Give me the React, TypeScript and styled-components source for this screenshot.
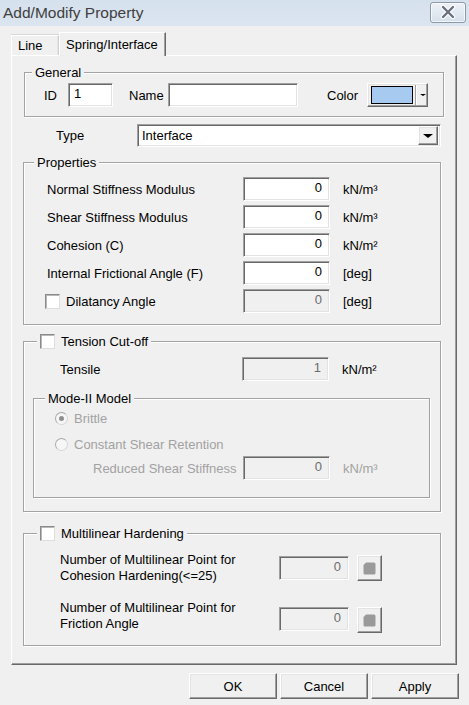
import React from "react";
import styled, { createGlobalStyle } from "styled-components";

const GlobalStyle = createGlobalStyle`
  html, body { margin: 0; padding: 0; background: #f0f0f0; }
  body {
    width: 469px; height: 705px; overflow: hidden;
    font-family: "Liberation Sans", Arial, sans-serif; font-size: 13px; color: #000;
  }
  #root { width: 469px; height: 705px; }
  * { box-sizing: border-box; }
`;

const Window = styled.div`
  width: 469px;
  height: 705px;
  display: flex;
  flex-direction: column;
  background: #f0f0f0;
`;

const TitleBar = styled.div`
  height: 26px;
  flex: none;
  display: flex;
  align-items: center;
  justify-content: space-between;
  padding: 0 3px 0 3px;
  background: linear-gradient(#d5e1ed, #dbe5f0);
`;

const Title = styled.div`
  font-size: 15.5px;
  color: #404040;
  padding-bottom: 1px;
`;

const CloseBtn = styled.div`
  width: 36px;
  height: 21px;
  margin-top: -2px;
  border: 1px solid #8d99aa;
  border-radius: 3px;
  background: linear-gradient(#eef2f7, #d6e0eb);
  box-shadow: inset 0 0 0 1px rgba(255, 255, 255, 0.7);
  display: flex;
  align-items: center;
  justify-content: center;
`;

const Body = styled.div`
  padding: 6px 12px 0 11px;
  display: flex;
  flex-direction: column;
`;

const TabRow = styled.div`
  display: flex;
  align-items: flex-end;
  height: 23px;
  position: relative;
  z-index: 1;
`;

const Tab = styled.div<{ $active?: boolean; $w: number }>`
  width: ${(p) => p.$w}px;
  height: ${(p) => (p.$active ? 24 : 20)}px;
  margin-bottom: ${(p) => (p.$active ? -1 : 0)}px;
  padding-left: 6px;
  display: flex;
  align-items: center;
  background: #f0f0f0;
  border: 1px solid;
  border-bottom: none;
  border-color: ${(p) => (p.$active ? "#fff #696969 transparent #fff" : "#fff #d0d0d0 transparent #fff")};
  box-shadow: ${(p) => (p.$active ? "inset -1px 0 0 #a0a0a0" : "inset -1px 0 0 #e6e6e6, 0 -1px 0 #d8d8d8")};
  padding-bottom: ${(p) => (p.$active ? 1 : 0)}px;
`;

const Panel = styled.div`
  width: 446px;
  height: 610px;
  border: 1px solid;
  border-color: #fff #696969 #696969 #fff;
  box-shadow: inset -1px -1px 0 #a0a0a0;
  display: flex;
  flex-direction: column;
  padding: 16px 0 0 11px;
`;

const Group = styled.div<{ $w: number; $h: number; $mt: number; $ml?: number; $pt: number; $pl?: number }>`
  position: relative;
  flex: none;
  width: ${(p) => p.$w}px;
  height: ${(p) => p.$h}px;
  margin-top: ${(p) => p.$mt}px;
  margin-left: ${(p) => p.$ml ?? 0}px;
  padding-top: ${(p) => p.$pt}px;
  padding-left: ${(p) => p.$pl ?? 0}px;
  border: 1px solid #a3a3a3;
  box-shadow: 1px 1px 0 #fff, inset 1px 1px 0 #fff;
  display: flex;
  flex-direction: column;
`;

const Legend = styled.div<{ $left: number }>`
  position: absolute;
  top: -9px;
  left: ${(p) => p.$left}px;
  height: 16px;
  padding: 0 3px;
  background: #f0f0f0;
  display: flex;
  align-items: center;
  gap: 6px;
  white-space: nowrap;
`;

const Row = styled.div<{ $h?: number; $mt?: number; $pl?: number; $align?: string }>`
  display: flex;
  align-items: ${(p) => p.$align ?? "center"};
  height: ${(p) => p.$h ?? 24}px;
  margin-top: ${(p) => p.$mt ?? 0}px;
  padding-left: ${(p) => p.$pl ?? 0}px;
  flex: none;
`;

const Label = styled.div<{ $w?: number; $ml?: number; $disabled?: boolean }>`
  width: ${(p) => (p.$w ? `${p.$w}px` : "auto")};
  margin-left: ${(p) => p.$ml ?? 0}px;
  flex: none;
  display: flex;
  align-items: center;
  gap: 6px;
  white-space: nowrap;
  color: ${(p) => (p.$disabled ? "#a2a2a2" : "#000")};
`;

const TwoLine = styled.div<{ $w: number }>`
  width: ${(p) => p.$w}px;
  flex: none;
  line-height: 16px;
`;

const Unit = styled.div<{ $disabled?: boolean }>`
  margin-left: 13px;
  color: ${(p) => (p.$disabled ? "#a2a2a2" : "#000")};
  white-space: nowrap;
`;

const Field = styled.input<{ $w: number; $h?: number; $left?: boolean; $mt?: number; $ml?: number }>`
  width: ${(p) => p.$w}px;
  height: ${(p) => p.$h ?? 24}px;
  margin: ${(p) => p.$mt ?? 0}px 0 0 ${(p) => p.$ml ?? 0}px;
  flex: none;
  border: 1px solid;
  border-color: #a0a0a0 #fff #fff #a0a0a0;
  box-shadow: inset 1px 1px 0 #696969, inset -1px -1px 0 #e3e3e3;
  background: #fff;
  color: #000;
  font-family: inherit;
  font-size: 13px;
  text-align: ${(p) => (p.$left ? "left" : "right")};
  padding: 0 ${(p) => (p.$left ? 4 : 7)}px 3px ${(p) => (p.$left ? 5 : 4)}px;
  outline: none;
  &:disabled {
    background: #f0f0f0;
    color: #6d6d6d;
    -webkit-text-fill-color: #6d6d6d;
    opacity: 1;
  }
`;

const CheckBox = styled.span`
  width: 15px;
  height: 15px;
  flex: none;
  background: #fff;
  border: 1px solid;
  border-color: #8a8a8a #dedede #dedede #8a8a8a;
  box-shadow: inset 1px 1px 0 #b8b8b8;
`;

const Radio = styled.span<{ $checked?: boolean }>`
  width: 13px;
  height: 13px;
  flex: none;
  border-radius: 50%;
  border: 1px solid #a9a9a9;
  border-right-color: #d6d6d6;
  border-bottom-color: #d6d6d6;
  background: #f6f6f6;
  display: flex;
  align-items: center;
  justify-content: center;
  &::after {
    content: "";
    width: 5px;
    height: 5px;
    border-radius: 50%;
    background: ${(p) => (p.$checked ? "#8f8f8f" : "transparent")};
  }
`;

const raised = `
  border: 1px solid;
  border-color: #fff #696969 #696969 #fff;
  box-shadow: inset -1px -1px 0 #a0a0a0, inset 1px 1px 0 #e3e3e3;
  background: #f0f0f0;
`;

const ColorButton = styled.div`
  ${raised}
  width: 61px;
  height: 24px;
  flex: none;
  display: flex;
  align-items: center;
  padding-left: 3px;
`;

const Swatch = styled.div<{ $color: string }>`
  width: 42px;
  height: 18px;
  border: 1px solid #000;
  background: ${(p) => p.$color};
`;

const Separator = styled.div`
  width: 2px;
  height: 20px;
  margin-left: 2px;
  border-left: 1px solid #a0a0a0;
  border-right: 1px solid #fff;
`;

const SmallArrow = styled.div<{ $size: number }>`
  margin-left: ${(p) => (p.$size > 4 ? 0 : 3)}px;
  width: 0;
  height: 0;
  border-left: ${(p) => p.$size}px solid transparent;
  border-right: ${(p) => p.$size}px solid transparent;
  border-top: ${(p) => Math.round(p.$size * 0.75)}px solid #000;
`;

const Combo = styled.div`
  width: 304px;
  height: 23px;
  flex: none;
  border: 1px solid;
  border-color: #a0a0a0 #fff #fff #a0a0a0;
  box-shadow: inset 1px 1px 0 #696969, inset -1px -1px 0 #e3e3e3;
  background: #fff;
  display: flex;
  align-items: center;
  justify-content: space-between;
  padding: 2px 2px 2px 4px;
`;

const ComboButton = styled.div`
  ${raised}
  width: 20px;
  height: 19px;
  display: flex;
  align-items: center;
  justify-content: center;
  padding-top: 1px;
`;

const SquareButton = styled.div<{ $mt: number }>`
  ${raised}
  width: 25px;
  height: 26px;
  margin: ${(p) => p.$mt}px 0 0 8px;
  flex: none;
  display: flex;
  align-items: center;
  justify-content: center;
`;

const Footer = styled.div`
  display: flex;
  justify-content: flex-end;
  gap: 3px;
  padding: 8px 10px 0 0;
`;

const PushButton = styled.button`
  ${raised}
  width: 88px;
  height: 26px;
  font-family: inherit;
  font-size: 13px;
  color: #000;
  padding: 0;
  margin: 0;
`;

const GrayIcon = () => (
  <svg width="13" height="13" viewBox="0 0 13 13">
    <path d="M3 0.5 H11 Q12.5 0.5 12.5 2 V11 Q12.5 12.5 11 12.5 H2 Q0.5 12.5 0.5 11 V3 Z" fill="#9a9a9a" />
  </svg>
);

const CloseIcon = () => (
  <svg width="16" height="14" viewBox="0 0 16 14">
    <path d="M3 2 L13 12 M13 2 L3 12" stroke="#fff" strokeWidth="4.5" strokeLinecap="round" />
    <path d="M3 2 L13 12 M13 2 L3 12" stroke="#69707c" strokeWidth="2.4" strokeLinecap="round" />
  </svg>
);

type PropRow = { label: string; value: string; unit: string; check?: boolean };

const propRows: PropRow[] = [
  { label: "Normal Stiffness Modulus", value: "0", unit: "kN/m³" },
  { label: "Shear Stiffness Modulus", value: "0", unit: "kN/m³" },
  { label: "Cohesion (C)", value: "0", unit: "kN/m²" },
  { label: "Internal Frictional Angle (F)", value: "0", unit: "[deg]" },
  { label: "Dilatancy Angle", value: "0", unit: "[deg]", check: true },
];

export default function App() {
  return (
    <>
      <GlobalStyle />
      <Window>
        <TitleBar>
          <Title>Add/Modify Property</Title>
          <CloseBtn>
            <CloseIcon />
          </CloseBtn>
        </TitleBar>
        <Body>
          <TabRow>
            <Tab $w={48}>Line</Tab>
            <Tab $w={107} $active>
              Spring/Interface
            </Tab>
          </TabRow>
          <Panel>
            <Group $w={420} $h={45} $mt={0} $ml={1} $pt={10}>
              <Legend $left={7}>General</Legend>
              <Row $pl={19}>
                <Label $w={24}>ID</Label>
                <Field $w={45} $left readOnly defaultValue="1" />
                <Label $w={39} $ml={16}>
                  Name
                </Label>
                <Field $w={130} $left readOnly defaultValue="" />
                <Label $w={40} $ml={29}>
                  Color
                </Label>
                <ColorButton>
                  <Swatch $color="#a7caf0" />
                  <Separator />
                  <SmallArrow $size={3} />
                </ColorButton>
              </Row>
            </Group>

            <Row $h={23} $mt={7} $pl={33}>
              <Label $w={81}>Type</Label>
              <Combo>
                <span>Interface</span>
                <ComboButton>
                  <SmallArrow $size={5} />
                </ComboButton>
              </Combo>
            </Row>

            <Group $w={418} $h={163} $mt={15} $pt={14} $pl={23}>
              <Legend $left={10}>Properties</Legend>
              {propRows.map((r, i) => (
                <Row key={r.label} $mt={i === 0 ? 0 : 4}>
                  {r.check ? (
                    <Label $w={198} $ml={-2}>
                      <CheckBox />
                      {r.label}
                    </Label>
                  ) : (
                    <Label $w={196}>{r.label}</Label>
                  )}
                  <Field $w={87} readOnly disabled={r.check} defaultValue={r.value} />
                  <Unit>{r.unit}</Unit>
                </Row>
              ))}
            </Group>

            <Group $w={418} $h={171} $mt={16} $pt={15}>
              <Legend $left={13}>
                <CheckBox />
                Tension Cut-off
              </Legend>
              <Row $pl={36}>
                <Label $w={182}>Tensile</Label>
                <Field $w={87} readOnly disabled defaultValue="1" />
                <Unit>kN/m²</Unit>
              </Row>
              <Group $w={397} $h={100} $mt={17} $ml={9} $pt={11}>
                <Legend $left={11}>Mode-II Model</Legend>
                <Row $h={16} $pl={21}>
                  <Label $disabled>
                    <Radio $checked />
                    Brittle
                  </Label>
                </Row>
                <Row $h={16} $mt={10} $pl={21}>
                  <Label $disabled>
                    <Radio />
                    Constant Shear Retention
                  </Label>
                </Row>
                <Row $mt={4} $pl={59}>
                  <Label $w={150} $disabled>
                    Reduced Shear Stiffness
                  </Label>
                  <Field $w={87} readOnly disabled defaultValue="0" />
                  <Unit $disabled>kN/m³</Unit>
                </Row>
              </Group>
            </Group>

            <Group $w={418} $h={113} $mt={21} $pt={18} $pl={36}>
              <Legend $left={13}>
                <CheckBox />
                Multilinear Hardening
              </Legend>
              <Row $h={32} $align="flex-start">
                <TwoLine $w={219}>
                  Number of Multilinear Point for
                  <br />
                  Cohesion Hardening(&lt;=25)
                </TwoLine>
                <Field $w={70} $mt={4} readOnly disabled defaultValue="0" />
                <SquareButton $mt={3}>
                  <GrayIcon />
                </SquareButton>
              </Row>
              <Row $h={33} $mt={16} $align="flex-start">
                <TwoLine $w={219}>
                  Number of Multilinear Point for
                  <br />
                  Friction Angle
                </TwoLine>
                <Field $w={70} $mt={7} readOnly disabled defaultValue="0" />
                <SquareButton $mt={7}>
                  <GrayIcon />
                </SquareButton>
              </Row>
            </Group>
          </Panel>
        </Body>
        <Footer>
          <PushButton>OK</PushButton>
          <PushButton>Cancel</PushButton>
          <PushButton>Apply</PushButton>
        </Footer>
      </Window>
    </>
  );
}
